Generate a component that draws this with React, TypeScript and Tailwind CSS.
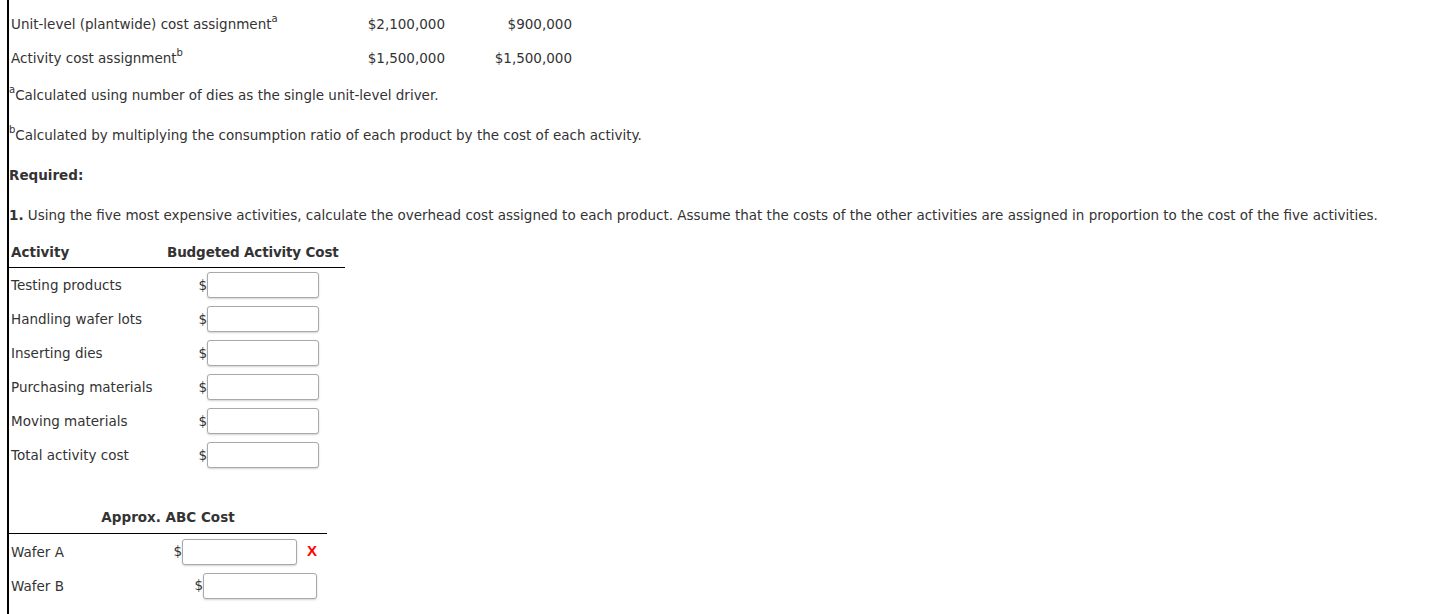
import React from 'react';

const font = { fontFamily: '"DejaVu Sans", Verdana, sans-serif' };

function MoneyInput({ w = 'w-[112px]' }: { w?: string }) {
  return (
    <input
      type="text"
      className={`${w} h-[26px] rounded-[3px] border border-[#a9a9a9] bg-white shadow-[0_1px_2px_rgba(0,0,0,0.18)] outline-none`}
    />
  );
}

const activities = [
  'Testing products',
  'Handling wafer lots',
  'Inserting dies',
  'Purchasing materials',
  'Moving materials',
  'Total activity cost',
];

export default function App() {
  return (
    <div className="min-h-[614px] bg-white text-[13.5px] text-[#333]" style={font}>
      <div className="ml-[7px] min-h-[614px] border-l-2 border-black pt-[7px]">
        {/* Comparison rows */}
        <div className="grid grid-cols-[310px_126px_127px]">
          <div className="flex h-[34px] items-center pl-[2px]">
            Unit-level (plantwide) cost assignment<sup className="text-[10px]">a</sup>
          </div>
          <div className="flex h-[34px] items-center justify-end">$2,100,000</div>
          <div className="flex h-[34px] items-center justify-end">$900,000</div>
          <div className="flex h-[34px] items-center pl-[2px]">
            Activity cost assignment<sup className="text-[10px]">b</sup>
          </div>
          <div className="flex h-[34px] items-center justify-end">$1,500,000</div>
          <div className="flex h-[34px] items-center justify-end">$1,500,000</div>
        </div>

        {/* Footnotes */}
        <div className="mt-[10px] flex h-[20px] items-center">
          <sup className="text-[10px]">a</sup>Calculated using number of dies as the single unit-level driver.
        </div>
        <div className="mt-[20px] flex h-[20px] items-center">
          <sup className="text-[10px]">b</sup>Calculated by multiplying the consumption ratio of each product by the cost of each activity.
        </div>

        <div className="mt-[20px] flex h-[20px] items-center font-bold">Required:</div>

        <div className="mt-[20px] flex h-[20px] items-center">
          <span className="font-bold">1.</span>&nbsp;Using the five most expensive activities, calculate the overhead cost assigned to each product. Assume that the costs of the other activities are assigned in proportion to the cost of the five activities.
        </div>

        {/* Activity table */}
        <div className="mt-[16px] w-[336px]">
          <div className="grid h-[27px] grid-cols-[158px_178px] border-b-[1.5px] border-black font-bold">
            <div className="flex items-start pl-[2px] pt-[1px]">Activity</div>
            <div className="flex items-start pt-[1px] tracking-[-0.15px]">Budgeted Activity Cost</div>
          </div>
          {activities.map((a) => (
            <div key={a} className="grid h-[34px] grid-cols-[158px_178px]">
              <div className="flex items-center pl-[2px] pt-[1px]">{a}</div>
              <div className="flex items-center justify-end pr-[26px]">
                <span>$</span>
                <MoneyInput />
              </div>
            </div>
          ))}
        </div>

        {/* ABC cost table */}
        <div className="mt-[28px] w-[318px]">
          <div className="flex h-[34px] items-center justify-center border-b-[1.5px] border-black pt-[2px] font-bold">
            Approx. ABC Cost
          </div>
          <div className="flex h-[34px] items-center">
            <div className="w-[160px] pl-[2px] pt-[2px]">Wafer A</div>
            <div className="flex flex-1 items-center justify-end pr-[10px] pt-[1px]">
              <span>$</span>
              <MoneyInput w="w-[115px]" />
              <span
                className="ml-[10px] text-[15px] font-bold text-[#ff0000]"
                style={{ fontFamily: '"Liberation Sans", Arial, sans-serif' }}
              >
                X
              </span>
            </div>
          </div>
          <div className="flex h-[34px] items-center">
            <div className="w-[160px] pl-[2px] pt-[2px]">Wafer B</div>
            <div className="flex flex-1 items-center justify-end pr-[10px] pt-[1px]">
              <span>$</span>
              <MoneyInput w="w-[114px]" />
            </div>
          </div>
        </div>
      </div>
    </div>
  );
}
